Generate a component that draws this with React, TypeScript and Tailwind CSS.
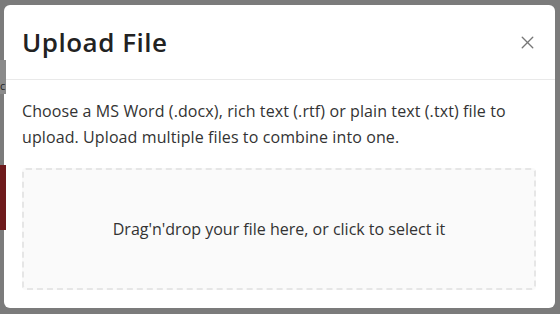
import { X } from 'lucide-react';

export default function App() {
  return (
    <div className="relative h-[314px] w-[560px] overflow-hidden bg-[#7b7b7b] font-['Open_Sans',sans-serif]">
      {/* page behind the backdrop */}
      <div className="absolute left-0 top-[60px] h-[34px] w-[6px] bg-[#8a8a8a]">
        <span className="absolute left-0 top-[20px] text-[11px] leading-none text-[#222]">c</span>
      </div>
      <div className="absolute left-0 top-[165px] h-[65px] w-[6px] bg-[#6e1a1c]" />

      <div className="flex pt-[5px] pl-[4px]">
        <div className="flex h-[303px] w-[551px] flex-col rounded-[6px] bg-white">
          {/* Header */}
          <div className="flex h-[75px] items-center justify-between border-b border-[#e9e9e9] pl-[18px] pr-[17px]">
            <h2 className="text-[26px] font-semibold tracking-[0.5px] text-[#222]">Upload File</h2>
            <button className="text-[#777]">
              <X size={21} strokeWidth={1.6} />
            </button>
          </div>

          {/* Body */}
          <div className="flex flex-1 flex-col pl-[18px] pr-[19px] pt-[18px] pb-[18px]">
            <p className="text-[16px] leading-[26px] tracking-[0.1px] text-[#333]">
              Choose a MS Word (.docx), rich text (.rtf) or plain text (.txt) file to upload. Upload multiple files to
              combine into one.
            </p>
            <div className="mt-[18px] flex flex-1 items-center justify-center rounded-[4px] border-2 border-dashed border-[#e6e6e6] bg-[#fafafa]">
              <span className="text-[16px] text-[#333]">Drag'n'drop your file here, or click to select it</span>
            </div>
          </div>
        </div>
      </div>
    </div>
  );
}
